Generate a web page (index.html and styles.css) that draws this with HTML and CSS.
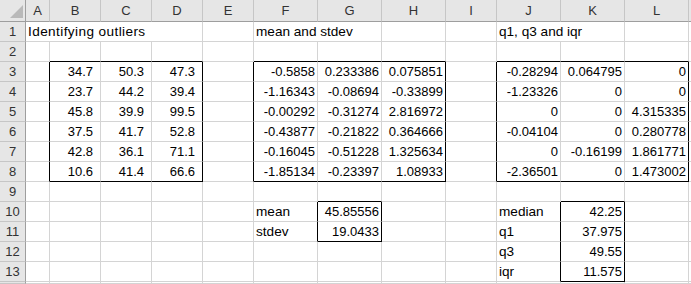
FILE: index.html
```html
<!DOCTYPE html>
<html lang="en">
<head>
<meta charset="utf-8">
<title>Identifying outliers</title>
<link rel="stylesheet" href="styles.css">
</head>
<body>
<div class="sheet">
  <!-- header row -->
  <div class="c h corner"><svg width="13" height="13" viewBox="0 0 13 13"><polygon points="13,0 13,13 0,13" fill="#b9b9b9"/></svg></div>
  <div class="c h">A</div><div class="c h">B</div><div class="c h">C</div><div class="c h">D</div><div class="c h">E</div><div class="c h">F</div><div class="c h">G</div><div class="c h">H</div><div class="c h">I</div><div class="c h">J</div><div class="c h">K</div><div class="c h">L</div><div class="c h"></div>

  <!-- row 1 -->
  <div class="c rh">1</div>
  <div class="c l title s4">Identifying outliers</div><div class="c"></div>
  <div class="c l s2">mean and stdev</div><div class="c"></div><div class="c"></div>
  <div class="c l s2">q1, q3 and iqr</div><div class="c"></div><div class="c"></div>

  <!-- row 2 -->
  <div class="c rh">2</div>
  <div class="c"></div><div class="c b"></div><div class="c b"></div><div class="c b"></div><div class="c"></div>
  <div class="c b"></div><div class="c b"></div><div class="c b"></div><div class="c"></div>
  <div class="c b"></div><div class="c b"></div><div class="c b"></div><div class="c"></div>

  <!-- row 3 -->
  <div class="c rh">3</div>
  <div class="c r"></div><div class="c n nb">34.7</div><div class="c n nb">50.3</div><div class="c n nb r">47.3</div><div class="c r"></div>
  <div class="c n">-0.5858</div><div class="c n">0.233386</div><div class="c n r">0.075851</div><div class="c r"></div>
  <div class="c n">-0.28294</div><div class="c n">0.064795</div><div class="c n r">0</div><div class="c"></div>

  <!-- row 4 -->
  <div class="c rh">4</div>
  <div class="c r"></div><div class="c n nb">23.7</div><div class="c n nb">44.2</div><div class="c n nb r">39.4</div><div class="c r"></div>
  <div class="c n">-1.16343</div><div class="c n">-0.08694</div><div class="c n r">-0.33899</div><div class="c r"></div>
  <div class="c n">-1.23326</div><div class="c n">0</div><div class="c n r">0</div><div class="c"></div>

  <!-- row 5 -->
  <div class="c rh">5</div>
  <div class="c r"></div><div class="c n nb">45.8</div><div class="c n nb">39.9</div><div class="c n nb r">99.5</div><div class="c r"></div>
  <div class="c n">-0.00292</div><div class="c n">-0.31274</div><div class="c n r">2.816972</div><div class="c r"></div>
  <div class="c n">0</div><div class="c n">0</div><div class="c n r">4.315335</div><div class="c"></div>

  <!-- row 6 -->
  <div class="c rh">6</div>
  <div class="c r"></div><div class="c n nb">37.5</div><div class="c n nb">41.7</div><div class="c n nb r">52.8</div><div class="c r"></div>
  <div class="c n">-0.43877</div><div class="c n">-0.21822</div><div class="c n r">0.364666</div><div class="c r"></div>
  <div class="c n">-0.04104</div><div class="c n">0</div><div class="c n r">0.280778</div><div class="c"></div>

  <!-- row 7 -->
  <div class="c rh">7</div>
  <div class="c r"></div><div class="c n nb">42.8</div><div class="c n nb">36.1</div><div class="c n nb r">71.1</div><div class="c r"></div>
  <div class="c n">-0.16045</div><div class="c n">-0.51228</div><div class="c n r">1.325634</div><div class="c r"></div>
  <div class="c n">0</div><div class="c n">-0.16199</div><div class="c n r">1.861771</div><div class="c"></div>

  <!-- row 8 -->
  <div class="c rh">8</div>
  <div class="c r"></div><div class="c n nb b">10.6</div><div class="c n nb b">41.4</div><div class="c n nb r b">66.6</div><div class="c r"></div>
  <div class="c n b">-1.85134</div><div class="c n b">-0.23397</div><div class="c n r b">1.08933</div><div class="c r"></div>
  <div class="c n b">-2.36501</div><div class="c n b">0</div><div class="c n r b">1.473002</div><div class="c"></div>

  <!-- row 9 -->
  <div class="c rh">9</div>
  <div class="c"></div><div class="c"></div><div class="c"></div><div class="c"></div><div class="c"></div>
  <div class="c"></div><div class="c b"></div><div class="c"></div><div class="c"></div>
  <div class="c"></div><div class="c b"></div><div class="c"></div><div class="c"></div>

  <!-- row 10 -->
  <div class="c rh">10</div>
  <div class="c"></div><div class="c"></div><div class="c"></div><div class="c"></div><div class="c"></div>
  <div class="c l r">mean</div><div class="c n r">45.85556</div><div class="c"></div><div class="c"></div>
  <div class="c l r">median</div><div class="c n r">42.25</div><div class="c"></div><div class="c"></div>

  <!-- row 11 -->
  <div class="c rh">11</div>
  <div class="c"></div><div class="c"></div><div class="c"></div><div class="c"></div><div class="c"></div>
  <div class="c l r">stdev</div><div class="c n r b">19.0433</div><div class="c"></div><div class="c"></div>
  <div class="c l r">q1</div><div class="c n r">37.975</div><div class="c"></div><div class="c"></div>

  <!-- row 12 -->
  <div class="c rh">12</div>
  <div class="c"></div><div class="c"></div><div class="c"></div><div class="c"></div><div class="c"></div>
  <div class="c"></div><div class="c"></div><div class="c"></div><div class="c"></div>
  <div class="c l r">q3</div><div class="c n r">49.55</div><div class="c"></div><div class="c"></div>

  <!-- row 13 -->
  <div class="c rh">13</div>
  <div class="c"></div><div class="c"></div><div class="c"></div><div class="c"></div><div class="c"></div>
  <div class="c"></div><div class="c"></div><div class="c"></div><div class="c"></div>
  <div class="c l r">iqr</div><div class="c n r b">11.575</div><div class="c"></div><div class="c"></div>

  <!-- row 14 (only its top edge is visible) -->
  <div class="c rh"></div>
  <div class="c"></div><div class="c"></div><div class="c"></div><div class="c"></div><div class="c"></div>
  <div class="c"></div><div class="c"></div><div class="c"></div><div class="c"></div>
  <div class="c"></div><div class="c"></div><div class="c"></div><div class="c"></div>
</div>
</body>
</html>
```
FILE: styles.css
```css
html, body {
  margin: 0;
  padding: 0;
  background: #ffffff;
  overflow: hidden;
}

body {
  font-family: "Liberation Sans", Arial, sans-serif;
  color: #000000;
}

.sheet {
  display: grid;
  grid-template-columns: 26px 24px 51px 51px 51px 51px 64px 64px 64px 51px 64px 64px 64px 2px;
  grid-template-rows: 22px repeat(13, 20px) 2px;
  width: 691px;
  height: 284px;
  overflow: hidden;
}

.c {
  box-sizing: border-box;
  border-right: 1px solid #d4d4d4;
  border-bottom: 1px solid #d4d4d4;
  font-size: 13px;
  line-height: 19px;
  white-space: nowrap;
  overflow: visible;
  padding: 0 2px;
  min-width: 0;
  min-height: 0;
}

.h {
  background: #e6e6e6;
  border-right-color: #c6c6c6;
  border-bottom-color: #9e9e9e;
  text-align: center;
  color: #333333;
  font-size: 13px;
  line-height: 21px;
}

.corner {
  display: flex;
  justify-content: flex-end;
  align-items: flex-end;
  padding: 0 2px 3px 0;
  border-right-color: #9e9e9e;
}

.corner svg {
  display: block;
}

.rh {
  background: #e6e6e6;
  border-right-color: #9e9e9e;
  border-bottom-color: #c6c6c6;
  text-align: center;
  color: #333333;
}

.l {
  font-size: 13.6px;
  text-align: left;
}

.title {
  letter-spacing: 0.4px;
}

.n {
  text-align: right;
}

.nb {
  padding-right: 7px;
}

.s4 {
  grid-column: span 4;
}

.s2 {
  grid-column: span 2;
}

.r {
  border-right-color: #000000;
}

.b {
  border-bottom-color: #000000;
}
```
